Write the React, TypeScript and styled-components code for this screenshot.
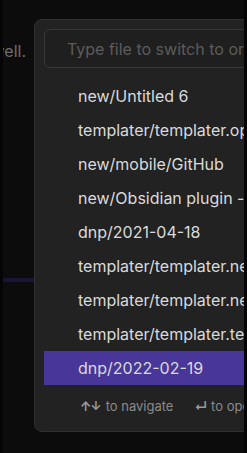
import React from "react";
import styled, { createGlobalStyle } from "styled-components";

const GlobalStyle = createGlobalStyle`
  html, body {
    margin: 0;
    padding: 0;
    background: #080808;
  }
  body {
    font-family: Inter, "Noto Sans", sans-serif;
  }
`;

const Screen = styled.div`
  width: 247px;
  height: 453px;
  display: flex;
  flex-direction: row;
  background: #070707;
`;

const EdgeStrip = styled.div`
  width: 3px;
  flex: 0 0 3px;
  background: #050505;
`;

const Workspace = styled.div`
  position: relative;
  flex: 1 1 auto;
  overflow: hidden;
  background: #0c0c0c;
`;

const BackdropText = styled.div`
  position: absolute;
  right: 218px;
  top: 41px;
  font-size: 16px;
  color: #6e6e6e;
`;

const BackdropBar = styled.div`
  position: absolute;
  left: 0;
  top: 278px;
  width: 40px;
  height: 4px;
  background: #1b1436;
`;

const Modal = styled.div`
  position: absolute;
  left: 31px;
  top: 19px;
  width: 260px;
  height: 413px;
  box-sizing: border-box;
  background: #222222;
  border: 1px solid #303030;
  border-radius: 8px;
  padding: 9px 0 0 9px;
  display: flex;
  flex-direction: column;
`;

const SearchInput = styled.div`
  height: 39px;
  box-sizing: border-box;
  border: 1px solid #383838;
  border-radius: 6px;
  background: #1f1f1f;
  display: flex;
  align-items: center;
  padding-left: 22px;
  font-size: 16px;
  color: #5c5c5c;
  white-space: nowrap;
`;

const ResultList = styled.div`
  margin-top: 11px;
  display: flex;
  flex-direction: column;
`;

const ResultRow = styled.div<{ $selected?: boolean }>`
  height: 34px;
  display: flex;
  align-items: center;
  padding-left: 34px;
  font-size: 16px;
  color: #dadada;
  white-space: nowrap;
  background: ${(p) => (p.$selected ? "#483699" : "transparent")};
`;

const Footer = styled.div`
  display: flex;
  align-items: center;
  gap: 21px;
  padding: 13px 0 0 36px;
  font-size: 13px;
  color: #8a8a8a;
  white-space: nowrap;
`;

const Hint = styled.span`
  display: flex;
  align-items: center;
  gap: 5px;
`;

const Keys = styled.span`
  font-weight: 700;
  font-size: 12.5px;
  color: #9a9a9a;
  letter-spacing: -1px;
`;

const files = [
  "new/Untitled 6",
  "templater/templater.open",
  "new/mobile/GitHub",
  "new/Obsidian plugin - ideas",
  "dnp/2021-04-18",
  "templater/templater.new",
  "templater/templater.new2",
  "templater/templater.test",
  "dnp/2022-02-19",
];

const App = () => {
  const selected = files.length - 1;

  return (
    <>
      <GlobalStyle />
      <Screen>
        <EdgeStrip />
        <Workspace>
          <BackdropText>well.</BackdropText>
          <BackdropBar />
          <Modal>
            <SearchInput>Type file to switch to or create...</SearchInput>
            <ResultList>
              {files.map((f, i) => (
                <ResultRow key={f} $selected={i === selected}>
                  {f}
                </ResultRow>
              ))}
            </ResultList>
            <Footer>
              <Hint>
                <Keys>↑↓</Keys> to navigate
              </Hint>
              <Hint>
                <Keys>↵</Keys> to open
              </Hint>
            </Footer>
          </Modal>
        </Workspace>
        <EdgeStrip />
      </Screen>
    </>
  );
};

export default App;
